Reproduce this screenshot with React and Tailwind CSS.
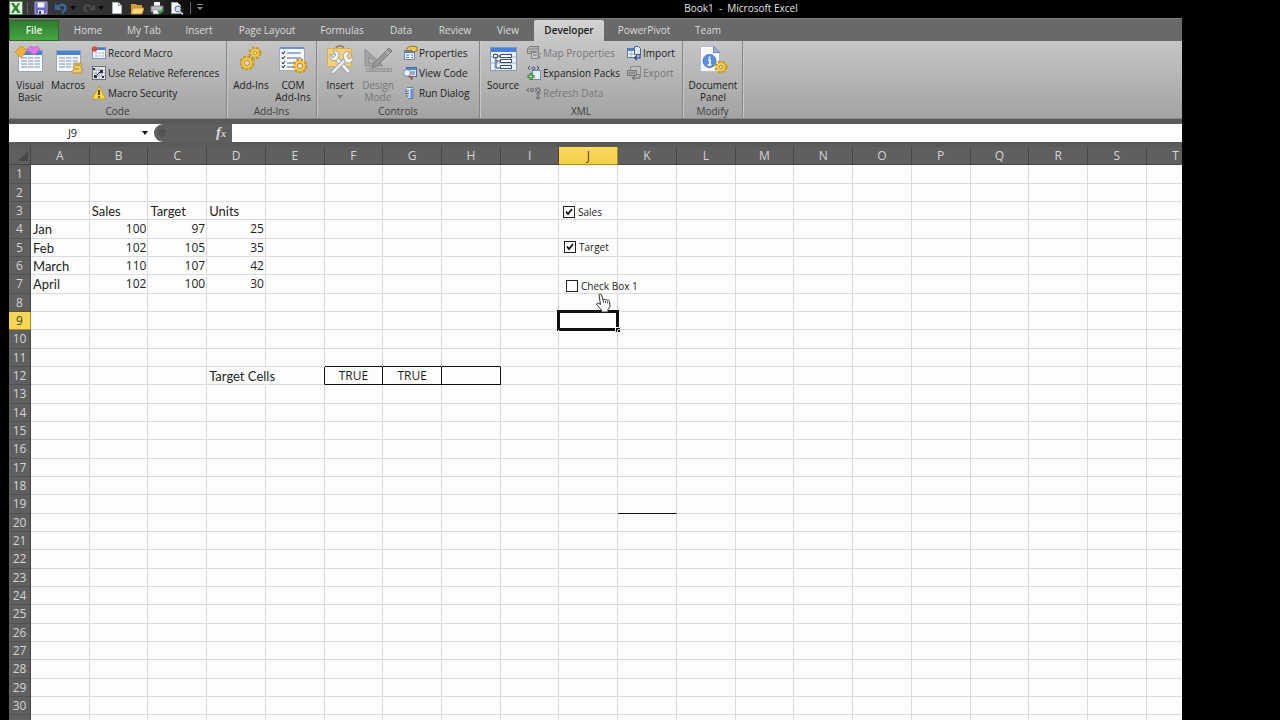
import { useState } from 'react';
import clsx from 'clsx';

const columns = 'ABCDEFGHIJKLMNOPQRST'.split('');
const rows = Array.from({ length: 31 }, (_, i) => i + 1);

const cells = {
  B3: 'Sales', C3: 'Target', D3: 'Units',
  A4: 'Jan', B4: 100, C4: 97, D4: 25,
  A5: 'Feb', B5: 102, C5: 105, D5: 35,
  A6: 'March', B6: 110, C6: 107, D6: 42,
  A7: 'April', B7: 102, C7: 100, D7: 30,
  D12: 'Target Cells', F12: 'TRUE', G12: 'TRUE',
};

const blackRight = ['E12', 'F12', 'G12', 'H12'];
const blackBottom = ['F11', 'G11', 'H11', 'F12', 'G12', 'H12', 'K19'];
const centered = ['F12', 'G12'];

const tabs = [
  { name: 'Home', width: 'w-[58px]' },
  { name: 'My Tab', width: 'w-[54px]' },
  { name: 'Insert', width: 'w-[56px]' },
  { name: 'Page Layout', width: 'w-[80px]' },
  { name: 'Formulas', width: 'w-[70px]' },
  { name: 'Data', width: 'w-[48px]' },
  { name: 'Review', width: 'w-[60px]' },
  { name: 'View', width: 'w-[46px]' },
  { name: 'Developer', width: 'w-[70px]' },
  { name: 'PowerPivot', width: 'w-[74px]' },
  { name: 'Team', width: 'w-[54px]' },
];

const gear = (cx, cy, r) => (
  <g>
    <circle cx={cx} cy={cy} r={r} fill="none" stroke="#c79a20" strokeWidth="3" strokeDasharray="2.6 1.4" />
    <circle cx={cx} cy={cy} r={r - 0.8} fill="#f8da55" stroke="#dcb030" strokeWidth="1" />
    <circle cx={cx} cy={cy} r={r - 3.2} fill="#e9dcc4" stroke="#c0762e" strokeWidth="0.9" />
  </g>
);

const sheetGrid = (
  <g>
    <rect x="3.5" y="5.5" width="24" height="21" fill="#f8fafd" stroke="#97a5bb" />
    <rect x="4" y="6" width="23" height="4" fill="#4a80d6" />
    <path d="M6 13h19M6 16h19M6 19h19M6 22h19" stroke="#9fb2d1" strokeWidth="1.4" />
    <path d="M12.5 11v14M19 11v14" stroke="#fff" />
  </g>
);

const VisualBasicIcon = () => (
  <svg viewBox="0 0 30 30" className="size-[30px]">
    {sheetGrid}
    <path d="M0 7l6-6 6 4-6 8z" fill="#eeb13e" stroke="#c98f2e" strokeWidth="0.8" />
    <path d="M12 4l4-3 3 2 3-2 3 3-6 6z" fill="#dd79e6" stroke="#c268cd" strokeWidth="0.8" />
  </svg>
);

const MacrosIcon = () => (
  <svg viewBox="0 0 30 30" className="size-[30px]">
    {sheetGrid}
    <path d="M21 18h8v2c-2 0-2 2 0 3v5h-8c-3 0-3-3 0-3z" fill="#f1cd69" stroke="#b98f31" />
    <path d="M22 20h5M22 24h4" stroke="#a67c1d" />
  </svg>
);

const AddInsIcon = () => (
  <svg viewBox="0 0 30 30" className="size-[30px]">
    {gear(19, 8, 5)}
    {gear(11, 18, 6)}
  </svg>
);

const ComAddInsIcon = () => (
  <svg viewBox="0 0 30 30" className="size-[30px]">
    <rect x="1.5" y="2.5" width="25" height="23" fill="#f7f9fd" stroke="#a4adbc" />
    <rect x="2" y="2" width="24" height="2" fill="#6c94d8" />
    <path d="M9 8h14M9 13h14M9 18h9M9 22h6" stroke="#7d96c4" strokeWidth="1.4" />
    <path d="M4 7l1 2 2-3M4 12l1 2 2-3M4 17l1 2 2-3M4 21l1 2 2-3" fill="none" stroke="#2c3038" />
    {gear(22, 21, 6)}
  </svg>
);

const InsertIcon = () => (
  <svg viewBox="0 0 30 30" className="size-[30px]">
    <path d="M11 4c0-4 8-4 8 0" fill="none" stroke="#8b8058" strokeWidth="1.6" />
    <rect x="2.5" y="3.5" width="24" height="18" rx="1" fill="#f0d27c" stroke="#d2ad55" />
    <path d="M9 11l14 15" stroke="#8b939d" strokeWidth="4.5" strokeLinecap="round" />
    <path d="M9 11l14 15" stroke="#f0f4f8" strokeWidth="3.2" strokeLinecap="round" />
    <path d="M5 9c-1 5 3 8 7 6l2-4c0-4-3-6-6-5l3 4-3 3z" fill="#f0f4f8" stroke="#8b939d" strokeWidth="0.8" />
    <path d="M20 15L8 27" stroke="#8b939d" strokeWidth="4" strokeLinecap="round" />
    <path d="M20 15L8 27" stroke="#e6ebf0" strokeWidth="2.8" strokeLinecap="round" />
    <path d="M18 11c1-4 4-5 7-4l-3 4 2 3 4-2c1 4-4 8-8 5z" fill="#eff3f7" stroke="#8b939d" strokeWidth="0.8" />
  </svg>
);

const DesignModeIcon = () => (
  <svg viewBox="0 0 30 30" className="size-[30px]">
    <path d="M2 4v17h18z" fill="#a5a5a5" stroke="#8a8a8a" />
    <path d="M6 12v6h7z" fill="#bfbfbf" stroke="#8a8a8a" />
    <path d="M26 3l3 3-15 15-5 2 2-5z" fill="#9a9a9a" stroke="#7b7b7b" />
    <path d="M23 6l3 3" stroke="#d0d0d0" />
    <rect x="3.5" y="23.5" width="25" height="3" fill="#b2b2b2" stroke="#999" />
    <path d="M7 24v2M10 24v2M13 24v2M16 24v2M19 24v2M22 24v2M25 24v2" stroke="#8c8c8c" />
  </svg>
);

const SourceIcon = () => (
  <svg viewBox="0 0 30 30" className="size-[30px]">
    <rect x="2.5" y="2.5" width="26" height="23" fill="#e9f0fa" stroke="#8497b5" />
    <rect x="3" y="3" width="25" height="4" fill="#4a80d6" />
    <path d="M7 8v17M23 8v17M3 12h25M3 18h25" stroke="#9db4d6" />
    <path d="M8 11v12h5M8 16h5M8 11h5" fill="none" stroke="#3b4a63" />
    <path d="M12.5 9.5h11v3h-11zM12.5 14.5h11v3h-11zM12.5 20.5h11v3h-11z" fill="#fff" stroke="#3b4a63" />
    <path d="M5.5 9.5h4v3h-4z" fill="#fff" stroke="#3b4a63" />
  </svg>
);

const DocumentPanelIcon = () => (
  <svg viewBox="0 0 30 30" className="size-[30px]">
    <path d="M2.5 1.5h13l6 6v19h-19z" fill="#f8fafd" stroke="#b7bfcc" />
    <path d="M15.5 1.5v6h6z" fill="#9cb9e3" stroke="#6c86b2" />
    <circle cx="11.5" cy="16" r="6.5" fill="#5b8ddb" stroke="#4b79c4" />
    <path d="M11.5 11.5v2M10 15h2v5M9.5 20h4" stroke="#fff" strokeWidth="1.6" fill="none" />
    {gear(23, 22, 5)}
  </svg>
);

const RecordMacroIcon = () => (
  <svg viewBox="0 0 16 16" className="size-4">
    <rect x="1.5" y="2.5" width="13" height="11" fill="#f2f5fb" stroke="#8392ab" />
    <rect x="2" y="3" width="12" height="2" fill="#4a80d6" />
    <path d="M4 8h9M4 11h9" stroke="#8ea4c9" />
    <path d="M7 6v7M10 6v7" stroke="#fff" />
    <circle cx="3.5" cy="4" r="2.8" fill="#d5503c" />
  </svg>
);

const RelativeIcon = () => (
  <svg viewBox="0 0 16 16" className="size-4">
    <rect x="1.5" y="1.5" width="13" height="13" fill="#eef1f6" stroke="#6a7280" />
    <path d="M2 5h12M2 8h12M2 11h12M5 2v12M8 2v12M11 2v12" stroke="#a3abba" strokeWidth="0.8" />
    <path d="M5 11l5-5" stroke="#222" />
    <path d="M2 3h2v2H2zM9 5h3v3H9zM3 10h3v3H3zM11 11h2v2h-2z" fill="#2b303a" />
  </svg>
);

const SecurityIcon = () => (
  <svg viewBox="0 0 16 16" className="size-4">
    <path d="M8 1.5L15 14H1z" fill="#f9d949" stroke="#c79c20" strokeLinejoin="round" />
    <path d="M8 5v5M8 11.3v1.6" stroke="#2d2508" strokeWidth="1.6" />
  </svg>
);

const PropertiesIcon = () => (
  <svg viewBox="0 0 16 16" className="size-4">
    <rect x="2.5" y="5.5" width="10" height="9" fill="#eef3fb" stroke="#7488a5" />
    <rect x="3" y="6" width="9" height="2" fill="#4a80d6" />
    <path d="M4 10h3M4 12.5h3M9 10h2M9 12.5h2" stroke="#4a80d6" />
    <path d="M5 3l4-2 6 1v4l-4 1-2-2-4 1z" fill="#efc64e" stroke="#8c6a18" strokeWidth="0.8" />
  </svg>
);

const ViewCodeIcon = () => (
  <svg viewBox="0 0 16 16" className="size-4">
    <rect x="4.5" y="2.5" width="10" height="9" fill="#dbe7f8" stroke="#4d6a99" />
    <rect x="5" y="3" width="9" height="2" fill="#5287d8" />
    <path d="M9 7h4M9 9h4" stroke="#4d6a99" />
    <circle cx="5" cy="8" r="3.4" fill="#eef5fc" stroke="#75839a" />
    <path d="M7.5 11l3 3.5" stroke="#a2622b" strokeWidth="2" />
  </svg>
);

const RunDialogIcon = () => (
  <svg viewBox="0 0 16 16" className="size-4">
    <path d="M5 2.5h6v11H6" fill="#d9e5f6" stroke="#667c9f" />
    <path d="M8.5 4h2v9h-2z" fill="#5e89cc" />
    <path d="M3 6h4M3 8.5h4M4 11h3" stroke="#4d6a99" />
  </svg>
);

const MapPropertiesIcon = () => (
  <svg viewBox="0 0 16 16" className="size-4">
    <path d="M1.5 3.5l2-2h9v7h-11z" fill="#b5b5b5" stroke="#7d7d7d" />
    <path d="M2 4h10M3 6.5h7" stroke="#858585" />
    <path d="M5.5 7.5h7v6h-7z" fill="#c4c4c4" stroke="#858585" />
    <path d="M7 10h4M15 8l-3 3 3 2" stroke="#777" fill="none" />
  </svg>
);

const ExpansionIcon = () => (
  <svg viewBox="0 0 16 16" className="size-4">
    <rect x="6.5" y="5.5" width="8" height="9" fill="#e4edf9" stroke="#7289ad" />
    <path d="M4 1L2 3l2 2M11 1l2 2-2 2M6 3.5c0-2 3-2 3 0s-3 2-3 0" fill="none" stroke="#2d4e86" />
    <path d="M5 8v7M1.5 11.5h7" stroke="#2f8a31" strokeWidth="3" />
    <path d="M5 9v5M2.5 11.5h5" stroke="#a6e08c" />
  </svg>
);

const RefreshIcon = () => (
  <svg viewBox="0 0 16 16" className="size-4">
    <path d="M3 3L1 5l2 2M9 3l2 2-2 2M4.5 5c0-2 3-2 3 0s-3 2-3 0" fill="none" stroke="#777" strokeWidth="1.3" />
    <path d="M11 3c4 0 4 4 1 5M12 6l-1 3 3 0M12 10v3M10 12l2 2 2-2" fill="none" stroke="#777" strokeWidth="1.3" />
  </svg>
);

const ImportIcon = () => (
  <svg viewBox="0 0 16 16" className="size-4">
    <rect x="1.5" y="3.5" width="9" height="9" fill="#f3f6fb" stroke="#5f7698" />
    <rect x="2" y="4" width="8" height="2" fill="#5287d8" />
    <path d="M2 9h8M5 6v6" stroke="#9db0d0" />
    <path d="M8.5 1.5h4l2 2v6h-6z" fill="#dce8f8" stroke="#476896" />
    <path d="M14 9v4H9M11 10.5L8.5 13l2.500 2" fill="none" stroke="#264f8d" strokeWidth="1.2" />
  </svg>
);

const ExportIcon = () => (
  <svg viewBox="0 0 16 16" className="size-4">
    <path d="M4.5 1.5h10v8h-10z" fill="#bcbcbc" stroke="#8a8a8a" />
    <path d="M1.5 5.5h9v5h-9z" fill="#a9a9a9" stroke="#777" />
    <path d="M3 8h6M14 9v4H6M9 11l-3 2 3 2" fill="none" stroke="#707070" />
  </svg>
);

const BigButton = ({ icon, lines, width, disabled, arrow }) => (
  <button
    type="button"
    disabled={disabled}
    className={clsx('flex shrink-0 flex-col items-center pt-0.5 leading-3', width, disabled ? 'text-[#777]' : 'text-[#1c1c1c]')}
  >
    {icon}
    <span className="mt-1 whitespace-nowrap">
      {lines.map((line) => (
        <span key={line} className="block">{line}</span>
      ))}
    </span>
    {arrow && (
      <svg viewBox="0 0 6 4" className="mt-1 h-1 w-1.5"><path d="M0 0h6L3 4z" fill="#7c7c7c" /></svg>
    )}
  </button>
);

const SmallButton = ({ icon, label, disabled }) => (
  <button
    type="button"
    disabled={disabled}
    className={clsx('flex h-5 items-center whitespace-nowrap', disabled ? 'text-[#777]' : 'text-[#1c1c1c]')}
  >
    {icon}
    <span className="ml-px">{label}</span>
  </button>
);

const Group = ({ title, width, children }) => (
  <section
    aria-label={title}
    className={clsx('flex shrink-0 flex-col border-r border-r-[#858585] shadow-[1px_0_0_#c9c9c9]', width)}
  >
    <div className="flex h-[63px] items-start pt-0.5">{children}</div>
    <div className="text-center leading-[14px] text-[#3c3c3c]">{title}</div>
  </section>
);

const QuickAccess = () => (
  <div className="flex h-full w-[291px] shrink-0 items-center bg-linear-to-r from-[#3a3a3a] via-[#2b2b2b] via-50% to-black to-75%">
    <svg viewBox="0 0 14 14" className="size-[14px]" aria-label="Excel">
      <rect width="13" height="13" x="0.5" y="0.5" fill="#e9f3e6" stroke="#4c8c48" />
      <path d="M2 2h3l2 3 2-3h2L8.5 7l3 5h-3L6.5 9l-2 3H2l3-5z" fill="#2c8a35" />
    </svg>
    <span className="ml-1 h-3 w-px bg-[#666]" />
    <button type="button" aria-label="Save" className="ml-1.5">
      <svg viewBox="0 0 14 14" className="size-[14px]">
        <path d="M1 1h12v12H1z" fill="#6a63c6" stroke="#a7a4e6" />
        <path d="M3.5 1.5h7v5h-7z" fill="#f2f3fc" />
        <path d="M4 9h6v4H4z" fill="#dcdcf2" />
        <path d="M5 10h2v3H5z" fill="#3d3892" />
      </svg>
    </button>
    <button type="button" aria-label="Undo" className="ml-1.5 flex items-center gap-0.5">
      <svg viewBox="0 0 14 14" className="size-[14px]">
        <path d="M4 6c4-4 9-2 7 3l-3 3" fill="none" stroke="#3d659b" strokeWidth="2.5" />
        <path d="M1 2v7h7z" fill="#3d659b" />
      </svg>
      <svg viewBox="0 0 6 4" className="h-1 w-1.5"><path d="M0 0h6L3 4z" fill="#0a0a0a" /></svg>
    </button>
    <button type="button" aria-label="Redo" className="ml-1.5 flex items-center gap-0.5">
      <svg viewBox="0 0 14 14" className="size-[14px]">
        <path d="M9 6c-4-4-8-1-6 3l2 2" fill="none" stroke="#4d4d4d" strokeWidth="2" />
        <path d="M13 3v6H7z" fill="#4d4d4d" />
      </svg>
      <svg viewBox="0 0 6 4" className="h-1 w-1.5"><path d="M0 0h6L3 4z" fill="#0a0a0a" /></svg>
    </button>
    <button type="button" aria-label="New" className="ml-1.5">
      <svg viewBox="0 0 14 14" className="size-[14px]">
        <path d="M2.5 1.5h6l3 3v8h-9z" fill="#fff" stroke="#a9b2c2" />
        <path d="M8.5 1.5v3h3" fill="none" stroke="#8a97ad" />
      </svg>
    </button>
    <button type="button" aria-label="Open" className="ml-1.5">
      <svg viewBox="0 0 14 14" className="size-[14px]">
        <path d="M1 3h5l1 1h5v9H1z" fill="#d79c33" />
        <path d="M3 7h11l-2 6H1z" fill="#fbd779" stroke="#c38c2a" strokeWidth="0.8" />
      </svg>
    </button>
    <button type="button" aria-label="Quick Print" className="ml-1.5">
      <svg viewBox="0 0 14 14" className="size-[14px]">
        <path d="M4 1h6v5H4z" fill="#f4f4f4" />
        <path d="M1 5h12v6H1z" fill="#b8bdc4" stroke="#6b7079" strokeWidth="0.8" />
        <path d="M3 9h6v4H3z" fill="#fff" stroke="#777" strokeWidth="0.6" />
        <path d="M8 10l2 2 3-4" fill="none" stroke="#35a03a" strokeWidth="1.8" />
      </svg>
    </button>
    <button type="button" aria-label="Print Preview" className="ml-1.5">
      <svg viewBox="0 0 14 14" className="size-[14px]">
        <path d="M1.5 1.5h6l3 3v8h-9z" fill="#f2f4f7" stroke="#9aa3b1" />
        <circle cx="8" cy="8" r="3" fill="#cfdded" stroke="#5f6f86" />
        <path d="M10 10.5l3 3" stroke="#b9bec6" strokeWidth="1.8" />
      </svg>
    </button>
    <span className="ml-1.5 h-3 w-px bg-[#666]" />
    <button type="button" aria-label="Customize Quick Access Toolbar" className="ml-1.5">
      <svg viewBox="0 0 6 7" className="h-[7px] w-1.5"><path d="M0 0h6v1H0zM0 3h6L3 6z" fill="#888" /></svg>
    </button>
  </div>
);

const FormCheckbox = ({ label, checked, onChange, place }) => (
  <label className={clsx('absolute flex items-center gap-[3px] whitespace-nowrap text-[10px] leading-3 text-[#222]', place)}>
    <span className="grid size-3 place-items-center">
      <input
        type="checkbox"
        checked={checked}
        onChange={onChange}
        className="peer col-start-1 row-start-1 size-3 appearance-none border border-[#222] bg-white"
      />
      <svg viewBox="0 0 8 8" className="pointer-events-none col-start-1 row-start-1 hidden size-2 peer-checked:block">
        <path d="M1 3.5l2 2.500 4-5" fill="none" stroke="#111" strokeWidth="1.8" />
      </svg>
    </span>
    {label}
  </label>
);

const Cell = ({ id }) => {
  const value = cells[id];
  const small = centered.includes(id) || typeof value === 'number';
  return (
    <td
      className={clsx(
        'relative border-r border-b whitespace-nowrap',
        blackRight.includes(id) ? 'border-r-[#111]' : id === 'D12' ? 'border-r-transparent' : 'border-r-[#d9dbdd]',
        blackBottom.includes(id) ? 'border-b-[#111]' : 'border-b-[#d9dbdd]',
        small && "font-['Open_Sans',sans-serif] text-xs leading-4",
        centered.includes(id) && 'text-center',
        typeof value === 'number' ? 'px-px text-right' : 'px-0.5',
      )}
    >
      {value}
      {id === 'J9' && (
        <span className="absolute -inset-0.5 border-[3px] border-[#111]">
          <span className="absolute -right-1 -bottom-1 size-[5px] border-t border-l border-white bg-[#111]" />
        </span>
      )}
    </td>
  );
};

const App = () => {
  const [activeTab, setActiveTab] = useState('Developer');
  const [boxes, setBoxes] = useState({ Sales: true, Target: true, 'Check Box 1': false });
  const [formula, setFormula] = useState('');
  const [cellName, setCellName] = useState('J9');

  const toggle = (name) => setBoxes({ ...boxes, [name]: !boxes[name] });

  return (
    <div className="h-screen overflow-hidden bg-black pr-[98px] pl-[9px] font-['Open_Sans',sans-serif] text-[10px]">
      <header className="flex h-[18px] items-center pb-[3px]">
        <QuickAccess />
        <h1 className="flex-1 text-center leading-4 whitespace-pre text-[#e6e6e6]">{'Book1  -  Microsoft Excel'}</h1>
      </header>

      <nav className="flex h-[23px] items-end border-t border-[#7c7c7c] bg-[#696969]">
        <button
          type="button"
          className="h-[21px] w-[50px] border border-[#2d6b2b] bg-linear-to-b from-[#2f7a31] to-[#46a63f] font-semibold text-[#e9f5e7]"
        >
          File
        </button>
        {tabs.map(({ name, width }) => (
          <button
            key={name}
            type="button"
            onClick={() => setActiveTab(name)}
            className={clsx(
              'h-[21px] whitespace-nowrap',
              width,
              name === activeTab
                ? 'mx-[3px] rounded-t-xs bg-linear-to-b from-[#d4d4d4] to-[#c6c6c6] font-semibold text-[#1c1c1c]'
                : 'font-medium text-[#dcdcdc]',
            )}
          >
            {name}
          </button>
        ))}
      </nav>

      <div className="flex h-[78px] border-b border-[#8a8a8a] bg-linear-to-b from-[#c6c6c6] via-[#b4b4b4] to-[#a3a3a3] font-medium">
        <Group title="Code" width="w-[218px]">
          <BigButton icon={<VisualBasicIcon />} lines={['Visual', 'Basic']} width="ml-0.5 w-[38px]" />
          <BigButton icon={<MacrosIcon />} lines={['Macros']} width="w-[38px]" />
          <div className="ml-1">
            <SmallButton icon={<RecordMacroIcon />} label="Record Macro" />
            <SmallButton icon={<RelativeIcon />} label="Use Relative References" />
            <SmallButton icon={<SecurityIcon />} label="Macro Security" />
          </div>
        </Group>
        <Group title="Add-Ins" width="w-[90px]">
          <BigButton icon={<AddInsIcon />} lines={['Add-Ins']} width="ml-[3px] w-[42px]" />
          <BigButton icon={<ComAddInsIcon />} lines={['COM', 'Add-Ins']} width="w-[42px]" />
        </Group>
        <Group title="Controls" width="w-[163px]">
          <BigButton icon={<InsertIcon />} lines={['Insert']} width="ml-1 w-[38px]" arrow />
          <BigButton icon={<DesignModeIcon />} lines={['Design', 'Mode']} width="w-[38px]" disabled />
          <div className="ml-[5px]">
            <SmallButton icon={<PropertiesIcon />} label="Properties" />
            <SmallButton icon={<ViewCodeIcon />} label="View Code" />
            <SmallButton icon={<RunDialogIcon />} label="Run Dialog" />
          </div>
        </Group>
        <Group title="XML" width="w-[203px]">
          <BigButton icon={<SourceIcon />} lines={['Source']} width="ml-[3px] w-[40px]" />
          <div className="ml-[3px] w-[100px]">
            <SmallButton icon={<MapPropertiesIcon />} label="Map Properties" disabled />
            <SmallButton icon={<ExpansionIcon />} label="Expansion Packs" />
            <SmallButton icon={<RefreshIcon />} label="Refresh Data" disabled />
          </div>
          <div>
            <SmallButton icon={<ImportIcon />} label="Import" />
            <SmallButton icon={<ExportIcon />} label="Export" disabled />
          </div>
        </Group>
        <Group title="Modify" width="w-[60px]">
          <BigButton icon={<DocumentPanelIcon />} lines={['Document', 'Panel']} width="w-[60px]" />
        </Group>
      </div>

      <div className="flex h-[28px] border-y-[5px] border-[#5a5a5a] bg-[#5f5f5f]">
        <div className="flex w-[145px] items-center bg-white">
          <input
            aria-label="Name Box"
            value={cellName}
            onChange={(e) => setCellName(e.target.value)}
            className="w-[127px] bg-transparent text-center text-[11px] text-[#222] outline-none"
          />
          <button type="button" aria-label="Named cells" className="ml-1.5">
            <svg viewBox="0 0 6 4" className="h-1 w-1.5"><path d="M0 0h6L3 4z" fill="#111" /></svg>
          </button>
        </div>
        <div className="flex w-[78px] bg-white">
          <div className="flex w-full items-center justify-between rounded-l-full bg-[#5f5f5f] pr-1.5 pl-1">
            <span className="size-2 rounded-full bg-[#525252]" />
            <button type="button" aria-label="Insert Function" className="font-['Liberation_Serif',serif] text-[15px] leading-4 font-bold text-[#d8d8d8] italic">
              f<span className="text-[10px]">x</span>
            </button>
          </div>
        </div>
        <input
          aria-label="Formula Bar"
          value={formula}
          onChange={(e) => setFormula(e.target.value)}
          className="min-w-0 flex-1 bg-white px-1 text-[11px] outline-none"
        />
      </div>

      <main className="relative h-[573px] overflow-hidden bg-[#fdfdfd]">
        <table className="w-[102%] table-fixed border-separate border-spacing-0 font-['Lato',sans-serif] text-[13px] leading-4 text-[#1e1e1e]">
          <thead className="font-['Open_Sans',sans-serif] text-xs leading-4">
            <tr className="h-[18px]">
              <th className="w-[22px] border-r border-b border-[#454545] bg-[#5f5f5f] p-0">
                <svg viewBox="0 0 12 12" className="mr-px ml-auto size-3"><path d="M11 1v10H1z" fill="#484848" /></svg>
              </th>
              {columns.map((col) => (
                <th
                  key={col}
                  className={clsx(
                    'border-r border-b p-0 font-normal',
                    col === 'J'
                      ? 'border-[#b48c1c] bg-linear-to-b from-[#f9d95f] to-[#f3cf4a] text-[#4a3c10]'
                      : 'border-[#454545] bg-[#5f5f5f] text-[#d4d4d4]',
                  )}
                >
                  {col}
                </th>
              ))}
            </tr>
          </thead>
          <tbody>
            {rows.map((row) => (
              <tr key={row} className={row % 3 === 1 ? 'h-[19px]' : 'h-[18px]'}>
                <th
                  className={clsx(
                    "border-r border-b p-0 font-['Open_Sans',sans-serif] text-xs leading-4 font-normal",
                    row === 9
                      ? 'border-[#b48c1c] bg-[#f7d65a] text-[#4a3c10]'
                      : 'border-r-[#454545] border-b-[#505050] bg-[#5f5f5f] text-[#d4d4d4]',
                  )}
                >
                  {row <= 30 && row}
                </th>
                {columns.map((col) => (
                  <Cell key={col} id={`${col}${row}`} />
                ))}
              </tr>
            ))}
          </tbody>
        </table>

        <FormCheckbox label="Sales" checked={boxes.Sales} onChange={() => toggle('Sales')} place="left-[554px] top-[59px]" />
        <FormCheckbox label="Target" checked={boxes.Target} onChange={() => toggle('Target')} place="left-[555px] top-[94px]" />
        <FormCheckbox label="Check Box 1" checked={boxes['Check Box 1']} onChange={() => toggle('Check Box 1')} place="left-[557px] top-[133px]" />

        <svg viewBox="0 0 16 20" className="pointer-events-none absolute top-[146px] left-[586px] h-5 w-4">
          <path
            d="M4 2c0-1.500 2-1.500 2.500 0l1.500 5c0-1 2-1 2.300 0 .5-1 2-.7 2.200.5.800-.6 2-.2 2 1l.5 5-2 3v2.500H6.500V17L2 12c-1-1.500.8-2.500 2-1.500l1.500 1z"
            fill="#fff" stroke="#333" strokeLinejoin="round"
          />
          <path d="M8 7l.7 3M10.300 7.500l.5 2.500M12.500 8.500l.3 2" stroke="#333" strokeWidth="0.9" />
        </svg>
      </main>
    </div>
  );
};

export default App;
